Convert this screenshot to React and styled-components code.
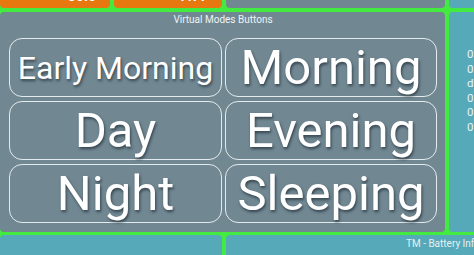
import React from "react";
import styled, { createGlobalStyle } from "styled-components";

const GlobalStyle = createGlobalStyle`
  html, body {
    margin: 0;
    padding: 0;
    background: #43ea3f;
    overflow: hidden;
    font-family: Roboto, "Liberation Sans", sans-serif;
  }
`;

const Page = styled.div`
  display: flex;
  flex-direction: column;
  width: 900px;
`;

const Row = styled.div`
  display: flex;
  gap: 4px;
  height: ${(p) => p.h}px;
  margin-top: ${(p) => p.mt || 0}px;
`;

const Tile = styled.div`
  flex: ${(p) => (p.w ? `0 0 ${p.w}px` : "1 1 auto")};
  background: ${(p) => p.bg};
  border-radius: 4px;
  box-sizing: border-box;
  overflow: hidden;
`;

const ValueTile = styled(Tile)`
  display: flex;
  align-items: flex-end;
  justify-content: flex-end;
  padding: 0 14px 5px 0;
  color: #fff;
  font-weight: 700;
  font-size: 14px;
  line-height: 14px;
`;

const ModesPanel = styled(Tile)`
  display: flex;
  flex-direction: column;
  padding: 0 8px 9px 9px;
`;

const PanelTitle = styled.div`
  height: 16px;
  line-height: 16px;
  font-size: 10px;
  color: #eef3f4;
  text-align: center;
  margin-bottom: 10px;
`;

const ButtonGrid = styled.div`
  flex: 1;
  display: grid;
  grid-template-columns: 213px 212px;
  grid-template-rows: repeat(3, 1fr);
  column-gap: 3px;
  row-gap: 4px;
`;

const ModeButton = styled.button`
  border: 1.5px solid #e4ebee;
  border-radius: 13px;
  background: transparent;
  color: #fff;
  font-family: Roboto, "Liberation Sans", sans-serif;
  font-size: ${(p) => p.size}px;
  line-height: 1;
  padding: 0;
  white-space: nowrap;
  text-shadow: 1px 2px 3px rgba(20, 30, 40, 0.65);
  cursor: pointer;
`;

const InfoList = styled(Tile)`
  padding: 35px 0 0 18px;
  color: #e8f3f5;
  font-size: 11.5px;
  line-height: 14.6px;
  white-space: nowrap;
`;

const BottomTile = styled(Tile)`
  font-size: 10px;
  line-height: 16px;
  padding-top: 1px;
  color: #e6f0f2;
  text-align: center;
`;

const modes = [
  { label: "Early Morning", size: 32 },
  { label: "Morning", size: 49 },
  { label: "Day", size: 49 },
  { label: "Evening", size: 49 },
  { label: "Night", size: 49 },
  { label: "Sleeping", size: 49 },
];

const batteryLines = ["0 %", "0.00 V", "discharging", "0 mA", "0 °C", "0 h"];

const GRAY = "#718893";
const TEAL = "#56a9b8";
const ORANGE = "#e6780f";

export default function App() {
  return (
    <>
      <GlobalStyle />
      <Page>
        <Row h={40} mt={-32}>
          <ValueTile w={110} bg={ORANGE}>30.0</ValueTile>
          <ValueTile w={108} bg={ORANGE}>7.77</ValueTile>
          <Tile w={219} bg={GRAY} />
          <Tile bg={TEAL} />
        </Row>
        <Row h={220} mt={4}>
          <ModesPanel w={445} bg={GRAY}>
            <PanelTitle>Virtual Modes Buttons</PanelTitle>
            <ButtonGrid>
              {modes.map((m) => (
                <ModeButton key={m.label} size={m.size}>
                  {m.label}
                </ModeButton>
              ))}
            </ButtonGrid>
          </ModesPanel>
          <InfoList bg={TEAL}>
            {batteryLines.map((line) => (
              <div key={line}>{line}</div>
            ))}
          </InfoList>
        </Row>
        <Row h={40} mt={3}>
          <Tile w={222} bg={TEAL} />
          <BottomTile w={434} bg={TEAL}>TM - Battery Info</BottomTile>
        </Row>
      </Page>
    </>
  );
}
